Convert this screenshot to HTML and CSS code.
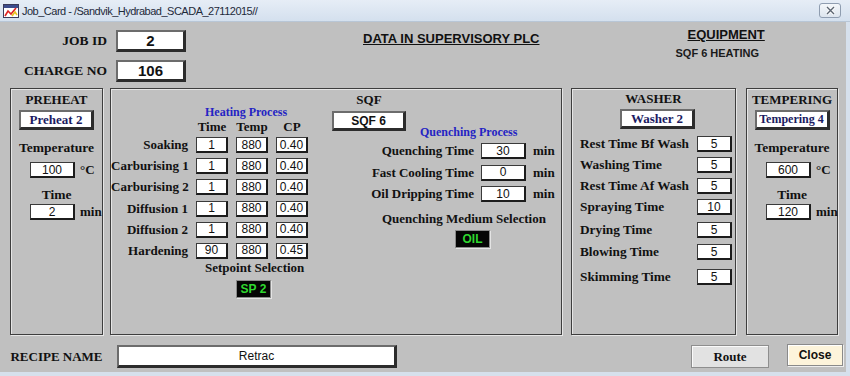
FILE: index.html
```html
<!DOCTYPE html>
<html lang="en">
<head>
    <meta charset="UTF-8">
    <title>Job_Card</title>
    <link rel="stylesheet" href="styles.css">
</head>
<body>
    <div class="window">
        <div class="titlebar">
            <svg class="app-icon" width="16" height="16" viewBox="0 0 16 16">
                <rect x="0.5" y="1.5" width="15" height="13" fill="#fff" stroke="#3a3a5a"/>
                <rect x="1" y="2" width="14" height="3" fill="#3c4c8c"/>
                <path d="M2 13 L5 8 L8 11 L13 5" fill="none" stroke="#d22" stroke-width="1.6"/>
                <path d="M9 13 L12 9 L14 12" fill="none" stroke="#e8c020" stroke-width="1.6"/>
            </svg>
            <span class="title">Job_Card - /Sandvik_Hydrabad_SCADA_27112015//</span>
            <span class="win-close">
                <svg width="11" height="9" viewBox="0 0 11 9">
                    <path d="M2 1 L9 8 M9 1 L2 8" stroke="#fff" stroke-width="3"/>
                    <path d="M2 1 L9 8 M9 1 L2 8" stroke="#5a6470" stroke-width="1.4"/>
                </svg>
            </span>
        </div>

        <div class="form">
            <div class="header">
                <div class="ids">
                    <span class="lbl">JOB ID</span>
                    <div class="box big">2</div>
                    <span class="lbl">CHARGE NO</span>
                    <div class="box big">106</div>
                </div>
                <div class="plc">DATA IN SUPERVISORY PLC</div>
                <div class="equip">
                    <div class="equip-title">EQUIPMENT</div>
                    <div class="equip-name">SQF 6 HEATING</div>
                </div>
            </div>

            <div class="panels">
                <!-- preheat -->
                <div class="panel side preheat">
                    <div class="ptitle">PREHEAT</div>
                    <div class="box big sel">Preheat 2</div>
                    <div class="sub">Temperature</div>
                    <div class="unit-row">
                        <div class="box num wide">100</div><span class="unit">°C</span>
                    </div>
                    <div class="sub">Time</div>
                    <div class="unit-row">
                        <div class="box num wide">2</div><span class="unit">min</span>
                    </div>
                </div>

                <!-- heating + quenching -->
                <div class="panel main">
                    <div class="heating">
                        <div class="proc-title">Heating Process</div>
                        <div class="hgrid head">
                            <span></span><span>Time</span><span>Temp</span><span>CP</span>
                        </div>
                        <div class="hgrid rows">
                            <span class="lbl">Soaking</span>
                            <div class="box num">1</div><div class="box num">880</div><div class="box num">0.40</div>
                            <span class="lbl">Carburising 1</span>
                            <div class="box num">1</div><div class="box num">880</div><div class="box num">0.40</div>
                            <span class="lbl">Carburising 2</span>
                            <div class="box num">1</div><div class="box num">880</div><div class="box num">0.40</div>
                            <span class="lbl">Diffusion 1</span>
                            <div class="box num">1</div><div class="box num">880</div><div class="box num">0.40</div>
                            <span class="lbl">Diffusion 2</span>
                            <div class="box num">1</div><div class="box num">880</div><div class="box num">0.40</div>
                            <span class="lbl">Hardening</span>
                            <div class="box num">90</div><div class="box num">880</div><div class="box num">0.45</div>
                        </div>
                        <div class="sp-title">Setpoint Selection</div>
                        <div class="led sp">SP 2</div>
                    </div>

                    <div class="quench">
                        <div class="sqf">
                            <div class="ptitle">SQF</div>
                            <div class="box big sqf-box">SQF 6</div>
                        </div>
                        <div class="proc-title q-title">Quenching Process</div>
                        <div class="qgrid">
                            <span class="lbl">Quenching Time</span>
                            <div class="box num">30</div><span class="unit">min</span>
                            <span class="lbl">Fast Cooling Time</span>
                            <div class="box num">0</div><span class="unit">min</span>
                            <span class="lbl">Oil Dripping Time</span>
                            <div class="box num">10</div><span class="unit">min</span>
                        </div>
                        <div class="medium">Quenching Medium Selection</div>
                        <div class="led oil">OIL</div>
                    </div>
                </div>

                <!-- washer -->
                <div class="panel washer">
                    <div class="ptitle">WASHER</div>
                    <div class="box big sel washer-box">Washer 2</div>
                    <div class="wrows">
                        <div class="wrow"><span class="lbl">Rest Time Bf Wash</span><div class="box num">5</div></div>
                        <div class="wrow"><span class="lbl">Washing Time</span><div class="box num">5</div></div>
                        <div class="wrow"><span class="lbl">Rest Time Af Wash</span><div class="box num">5</div></div>
                        <div class="wrow"><span class="lbl">Spraying Time</span><div class="box num">10</div></div>
                        <div class="wrow mt2"><span class="lbl">Drying Time</span><div class="box num">5</div></div>
                        <div class="wrow mt1"><span class="lbl">Blowing Time</span><div class="box num">5</div></div>
                        <div class="wrow mt4"><span class="lbl">Skimming Time</span><div class="box num">5</div></div>
                    </div>
                </div>

                <!-- tempering -->
                <div class="panel side tempering">
                    <div class="ptitle">TEMPERING</div>
                    <div class="box big sel temper-box">Tempering 4</div>
                    <div class="sub">Temperature</div>
                    <div class="unit-row">
                        <div class="box num wide">600</div><span class="unit">°C</span>
                    </div>
                    <div class="sub">Time</div>
                    <div class="unit-row">
                        <div class="box num wide">120</div><span class="unit">min</span>
                    </div>
                </div>
            </div>

            <div class="footer">
                <span class="lbl recipe-lbl">RECIPE NAME</span>
                <div class="box big recipe">Retrac</div>
                <button class="btn route">Route</button>
                <button class="btn close">Close</button>
            </div>
        </div>
    </div>
</body>
</html>
```

FILE: styles.css
```css
* {
    box-sizing: border-box;
}
body {
    margin: 0;
    background-color: #c0c0c0;
    font-family: "Liberation Serif", "Times New Roman", serif;
    color: #111;
}
.window {
    width: 850px;
    height: 376px;
    display: flex;
    flex-direction: column;
    background-color: #c0c0c0;
}

/* title bar */
.titlebar {
    height: 22px;
    display: flex;
    align-items: center;
    padding-left: 3px;
    background: linear-gradient(#e6edf6, #d4e0ee);
    border-bottom: 1px solid #b8c6d6;
}
.app-icon {
    flex: none;
}
.title {
    margin-left: 3px;
    font-family: "Liberation Sans", Arial, sans-serif;
    font-size: 11px;
    letter-spacing: -0.5px;
    color: #1e2a3a;
}
.win-close {
    margin-left: auto;
    margin-right: 9px;
    width: 22px;
    height: 15px;
    display: flex;
    align-items: center;
    justify-content: center;
    border: 1px solid #8f9db0;
    border-radius: 3px;
    background: linear-gradient(#f4f7fa, #dde5ee);
}

/* form */
.form {
    flex: 1;
    padding-left: 10px;
    border-right: 4px solid #d6e0ec;
    border-bottom: 4px solid #d6e0ec;
}
.lbl {
    font-weight: bold;
    font-size: 13px;
    white-space: nowrap;
}
.box {
    background-color: #fff;
    display: flex;
    align-items: center;
    justify-content: center;
    font-family: "Liberation Sans", Arial, sans-serif;
    color: #111;
}
.box.big {
    border-style: solid;
    border-width: 2px 3px 3px 2px;
    border-color: #6c6c6c #2c2c2c #2c2c2c #6c6c6c;
}
.box.num {
    height: 16px;
    width: 32px;
    font-size: 12px;
    border: 1px solid #3a3a3a;
    border-right: 2px solid #1c1c1c;
    border-bottom: 2px solid #1c1c1c;
}
.box.num.wide {
    width: 45px;
}

/* header */
.header {
    height: 66px;
    display: flex;
}
.ids {
    display: grid;
    grid-template-columns: 97px 70px;
    column-gap: 9px;
    row-gap: 8px;
    padding-top: 8px;
    align-content: start;
    align-items: center;
}
.ids .lbl {
    text-align: right;
    font-size: 13.5px;
}
.ids .box {
    height: 22px;
    font-weight: bold;
    font-size: 15px;
}
.plc {
    margin-left: 177px;
    padding-top: 9px;
    font-family: "Liberation Sans", Arial, sans-serif;
    font-weight: bold;
    font-size: 13px;
    text-decoration: underline;
}
.equip {
    margin-left: 136px;
    padding-top: 5px;
    font-family: "Liberation Sans", Arial, sans-serif;
    font-weight: bold;
}
.equip-title {
    padding-left: 12px;
    font-size: 13px;
    text-decoration: underline;
}
.equip-name {
    margin-top: 5px;
    font-size: 11px;
    color: #1a1a1a;
}

/* panels */
.panels {
    display: flex;
    height: 247px;
}
.panel {
    border: 1px solid #3e3e3e;
    box-shadow: 1px 1px 0 #e6e6e6, inset 1px 1px 0 #e6e6e6;
}
.ptitle {
    font-weight: bold;
    font-size: 13px;
    line-height: 15px;
}
.side {
    display: flex;
    flex-direction: column;
    align-items: center;
    padding-top: 3px;
}
.preheat {
    width: 93px;
}
.box.sel {
    margin-top: 3px;
    height: 20px;
    width: 75px;
    font-family: "Liberation Serif", "Times New Roman", serif;
    font-weight: bold;
    font-size: 13px;
    color: #1b1b62;
}
.sub {
    margin-top: 10px;
    font-weight: bold;
    font-size: 13.5px;
    line-height: 15px;
}
.unit-row {
    align-self: flex-start;
    margin-left: 19px;
    margin-top: 7px;
    display: flex;
    align-items: center;
    gap: 5px;
}
.unit-row + .sub {
    margin-top: 9px;
}
.unit-row:last-child {
    margin-top: 2px;
}
.unit {
    font-weight: bold;
    font-size: 13px;
}

/* main panel */
.main {
    width: 452px;
    margin-left: 7px;
    display: flex;
}
.heating {
    width: 214px;
    padding-top: 16px;
}
.proc-title {
    margin-left: 94px;
    font-weight: bold;
    font-size: 12px;
    line-height: 14px;
    color: #2424c4;
}
.hgrid {
    display: grid;
    grid-template-columns: 77px 32px 32px 32px;
    column-gap: 8px;
}
.hgrid.head {
    margin-top: 1px;
    font-weight: bold;
    font-size: 13px;
    line-height: 14px;
    text-align: center;
}
.hgrid.rows {
    margin-top: 3px;
    row-gap: 5.2px;
}
.hgrid .lbl {
    text-align: right;
    line-height: 15px;
}
.sp-title {
    margin-top: 2px;
    margin-left: 94px;
    font-weight: bold;
    font-size: 13px;
    line-height: 14px;
}
.led {
    height: 18px;
    width: 35px;
    display: flex;
    align-items: center;
    justify-content: center;
    background-color: #050505;
    border: 1px solid #8a8a8a;
    box-shadow: 1px 1px 0 #e4e4e4;
    font-family: "Liberation Sans", Arial, sans-serif;
    font-weight: bold;
    font-size: 12px;
    color: #2fd82f;
}
.sp {
    margin-top: 5px;
    margin-left: 125px;
}
.quench {
    flex: 1;
    padding-top: 3px;
}
.sqf {
    margin-left: 7px;
    width: 74px;
    text-align: center;
}
.sqf-box {
    margin-top: 4px;
    height: 20px;
    font-weight: bold;
    font-size: 12px;
}
.q-title {
    margin-top: -6px;
    margin-left: 95px;
}
.qgrid {
    margin-top: 4px;
    display: grid;
    grid-template-columns: 149px 45px auto;
    column-gap: 7px;
    row-gap: 5.5px;
    align-items: center;
}
.qgrid .lbl {
    text-align: right;
}
.qgrid .box {
    width: 45px;
}
.medium {
    margin-top: 9px;
    margin-left: 57px;
    font-weight: bold;
    font-size: 13px;
    line-height: 15px;
}
.oil {
    margin-top: 4px;
    margin-left: 130px;
}

/* washer */
.washer {
    width: 165px;
    margin-left: 9px;
    padding-top: 2px;
    display: flex;
    flex-direction: column;
}
.washer .ptitle {
    text-align: center;
}
.washer-box {
    margin-left: 48px;
    width: 82px;
    height: 21px;
}
.wrows {
    margin-top: 7px;
    display: flex;
    flex-direction: column;
    gap: 5px;
}
.wrow {
    display: flex;
    align-items: center;
    justify-content: space-between;
    padding: 0 3px 0 8px;
}
.wrow .lbl {
    font-size: 13.3px;
}
.wrow .box {
    width: 35px;
}
.mt2 {
    margin-top: 2px;
}
.mt1 {
    margin-top: 1px;
}
.mt4 {
    margin-top: 4px;
}

/* tempering */
.tempering {
    width: 92px;
    margin-left: 10px;
}
.temper-box {
    width: 74px;
    font-size: 12px !important;
}

/* footer */
.footer {
    margin-top: 9px;
    display: flex;
    align-items: flex-start;
}
.recipe-lbl {
    width: 93px;
    margin-top: 5px;
    text-align: center;
}
.recipe {
    margin-left: 14px;
    margin-top: 1px;
    width: 280px;
    height: 23px;
    font-size: 12px;
}
.btn {
    padding: 0;
    cursor: pointer;
}
.route {
    margin-left: 294px;
    margin-top: 1px;
    width: 78px;
    height: 23px;
    background-color: #e2e2e2;
    border: 1px solid #8e8e8e;
    box-shadow: inset 1px 1px 0 #fafafa;
    font-family: "Liberation Serif", "Times New Roman", serif;
    font-weight: bold;
    font-size: 13px;
    color: #111;
}
.close {
    margin-left: 18px;
    width: 56px;
    height: 22px;
    background-color: #fdf4db;
    border: 1px solid #8a8a8a;
    box-shadow: inset 1px 1px 0 #fff, 1px 1px 0 #eee;
    font-family: "Liberation Sans", Arial, sans-serif;
    font-weight: bold;
    font-size: 12px;
    color: #111;
}
```
